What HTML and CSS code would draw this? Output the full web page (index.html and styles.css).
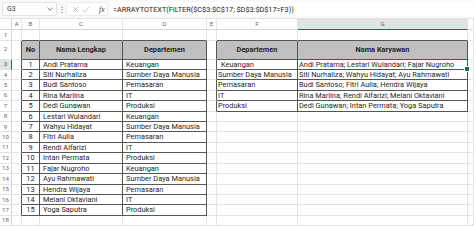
FILE: index.html
```html
<!DOCTYPE html>
<html lang="id">
<head>
  <meta charset="UTF-8">
  <title>ARRAYTOTEXT FILTER</title>
  <link rel="stylesheet" href="styles.css">
</head>
<body>
  <div class="formula-bar">
    <div class="name-box">
      <span>G3</span>
      <svg class="caret" width="6" height="4" viewBox="0 0 6 4"><path d="M0.5 0.8 L3 3.2 L5.5 0.8" fill="none" stroke="#555" stroke-width="0.8"/></svg>
    </div>
    <span class="more">&#8942;</span>
    <div class="fx-tools">
      <svg width="7" height="7" viewBox="0 0 7 7"><path d="M1 1 L6 6 M6 1 L1 6" stroke="#b8b8b8" stroke-width="0.8"/></svg>
      <svg width="8" height="7" viewBox="0 0 8 7"><path d="M0.8 3.8 L2.8 5.8 L7.2 1" fill="none" stroke="#b8b8b8" stroke-width="0.8"/></svg>
      <span class="fx">fx</span>
    </div>
    <div class="formula">=ARRAYTOTEXT(FILTER($C$3:$C$17; $D$3:$D$17=F3))</div>
  </div>

  <div class="sheet">
    <!-- column headers -->
    <div class="corner"></div><div class="ch">A</div><div class="ch">B</div><div class="ch">C</div><div class="ch">D</div><div class="ch">E</div><div class="ch">F</div><div class="ch ch-sel">G</div><div class="ch"></div>

    <!-- row 1 -->
    <div class="rh">1</div><div></div><div class="et"></div><div class="et"></div><div class="et"></div><div></div><div class="et"></div><div class="et"></div><div></div>

    <!-- row 2: table headers -->
    <div class="rh">2</div><div class="el"></div><div class="hd">No</div><div class="hd">Nama Lengkap</div><div class="hd">Departemen</div><div class="el"></div><div class="hd">Departemen</div><div class="hd">Nama Karyawan</div><div></div>

    <div class="rh rh-sel">3</div><div class="el"></div><div class="tb num">1</div><div class="tb">Andi Pratama</div><div class="tb">Keuangan</div><div class="el"></div><div class="tb dept indent">Keuangan</div><div class="tb names selected">Andi Pratama; Lestari Wulandari; Fajar Nugroho</div><div></div>
    <div class="rh">4</div><div class="el"></div><div class="tb num">2</div><div class="tb">Siti Nurhaliza</div><div class="tb">Sumber Daya Manusia</div><div class="el"></div><div class="tb dept">Sumber Daya Manusia</div><div class="tb names">Siti Nurhaliza; Wahyu Hidayat; Ayu Rahmawati</div><div></div>
    <div class="rh">5</div><div class="el"></div><div class="tb num">3</div><div class="tb">Budi Santoso</div><div class="tb">Pemasaran</div><div class="el"></div><div class="tb dept">Pemasaran</div><div class="tb names">Budi Santoso; Fitri Aulia; Hendra Wijaya</div><div></div>
    <div class="rh">6</div><div class="el"></div><div class="tb num">4</div><div class="tb">Rina Marlina</div><div class="tb">IT</div><div class="el"></div><div class="tb dept">IT</div><div class="tb names">Rina Marlina; Rendi Alfarizi; Melani Oktaviani</div><div></div>
    <div class="rh">7</div><div class="el"></div><div class="tb num">5</div><div class="tb">Dedi Gunawan</div><div class="tb">Produksi</div><div class="el"></div><div class="tb dept">Produksi</div><div class="tb names">Dedi Gunawan; Intan Permata; Yoga Saputra</div><div></div>
    <div class="rh">8</div><div class="el"></div><div class="tb num">6</div><div class="tb">Lestari Wulandari</div><div class="tb">Keuangan</div><div></div><div></div><div></div><div></div>
    <div class="rh">9</div><div class="el"></div><div class="tb num">7</div><div class="tb">Wahyu Hidayat</div><div class="tb">Sumber Daya Manusia</div><div></div><div></div><div></div><div></div>
    <div class="rh">10</div><div class="el"></div><div class="tb num">8</div><div class="tb">Fitri Aulia</div><div class="tb">Pemasaran</div><div></div><div></div><div></div><div></div>
    <div class="rh">11</div><div class="el"></div><div class="tb num">9</div><div class="tb">Rendi Alfarizi</div><div class="tb">IT</div><div></div><div></div><div></div><div></div>
    <div class="rh">12</div><div class="el"></div><div class="tb num">10</div><div class="tb">Intan Permata</div><div class="tb">Produksi</div><div></div><div></div><div></div><div></div>
    <div class="rh">13</div><div class="el"></div><div class="tb num">11</div><div class="tb">Fajar Nugroho</div><div class="tb">Keuangan</div><div></div><div></div><div></div><div></div>
    <div class="rh">14</div><div class="el"></div><div class="tb num">12</div><div class="tb">Ayu Rahmawati</div><div class="tb">Sumber Daya Manusia</div><div></div><div></div><div></div><div></div>
    <div class="rh">15</div><div class="el"></div><div class="tb num">13</div><div class="tb">Hendra Wijaya</div><div class="tb">Pemasaran</div><div></div><div></div><div></div><div></div>
    <div class="rh">16</div><div class="el"></div><div class="tb num">14</div><div class="tb">Melani Oktaviani</div><div class="tb">IT</div><div></div><div></div><div></div><div></div>
    <div class="rh">17</div><div class="el"></div><div class="tb num">15</div><div class="tb">Yoga Saputra</div><div class="tb">Produksi</div><div></div><div></div><div></div><div></div>
    <div class="rh">18</div><div></div><div></div><div></div><div></div><div></div><div></div><div></div><div></div>
  </div>
</body>
</html>
```

FILE: styles.css
```css
* {
  box-sizing: border-box;
}

body {
  margin: 0;
  width: 474px;
  height: 226px;
  overflow: hidden;
  background: #fff;
  font-family: Roboto, "Liberation Sans", sans-serif;
  color: #1f1f1f;
}

/* formula bar */

.formula-bar {
  height: 19px;
  display: flex;
  align-items: center;
  padding: 0 0 0 2px;
  background: #f9f9f9;
  border-bottom: 1px solid #e3e3e3;
}

.name-box {
  width: 55px;
  height: 14px;
  display: flex;
  align-items: center;
  justify-content: space-between;
  padding: 0 3px 0 4px;
  background: #fff;
  border: 1px solid #e2e2e2;
  border-radius: 2px;
  font-size: 7px;
  color: #333;
}

.more {
  width: 9px;
  text-align: center;
  font-size: 8px;
  color: #555;
}

.fx-tools {
  width: 42px;
  height: 14px;
  display: flex;
  align-items: center;
  gap: 3px;
  padding-left: 5px;
  background: #fff;
  border: 1px solid #ececec;
  border-radius: 2px;
}

.fx {
  margin-left: 6px;
  font-family: "Liberation Serif", serif;
  font-style: italic;
  font-size: 8px;
  color: #444;
}

.formula {
  flex: 1;
  height: 14px;
  display: flex;
  align-items: center;
  margin-left: 2px;
  padding-left: 3px;
  background: #fff;
  font-size: 7.3px;
  color: #222;
  white-space: nowrap;
}

/* sheet grid */

.sheet {
  display: grid;
  grid-template-columns: 12px 10px 18px 83px 84px 10px 81px 170px 6px;
  grid-template-rows: 11px 10.5px 19px repeat(16, 10.43px);
  font-size: 7.4px;
}

.sheet > div {
  border-right: 1px solid #e4e4e4;
  border-bottom: 1px solid #e4e4e4;
  white-space: nowrap;
  overflow: hidden;
  display: flex;
  align-items: center;
  padding-left: 3px;
  line-height: 1;
}

.sheet > .corner {
  border-right: 1px solid #d6d6d6;
  border-bottom: 1px solid #d6d6d6;
}

.sheet > .ch {
  justify-content: center;
  padding: 0;
  font-size: 6.2px;
  color: #6a6a6a;
  border-bottom: 1px solid #d6d6d6;
}

.sheet > .ch-sel {
  background: #e3e3e3;
  border-bottom: 1px solid #1e7145;
  color: #1e7145;
}

.sheet > .rh {
  justify-content: center;
  padding: 0;
  font-size: 6.2px;
  color: #6a6a6a;
  border-right: 1px solid #d6d6d6;
}

.sheet > .rh-sel {
  background: #e3e3e3;
  border-right: 1px solid #1e7145;
  color: #1e7145;
}

/* data tables */

.sheet > .et {
  border-bottom: 1px solid #555;
}

.sheet > .el {
  border-right: 1px solid #555;
}

.sheet > .hd {
  justify-content: center;
  padding: 0;
  background: #c0c0c0;
  font-weight: bold;
  border-right: 1px solid #555;
  border-bottom: 1px solid #555;
}

.sheet > .tb {
  border-right: 1px solid #555;
  border-bottom: 1px solid #555;
  padding-left: 3px;
}

.sheet > .num {
  justify-content: center;
  padding: 0;
}

.sheet > .dept {
  padding-left: 1px;
}

.sheet > .names {
  padding-left: 1px;
}

.sheet > .indent {
  padding-left: 4px;
}

.sheet > .selected {
  position: relative;
  overflow: visible;
}

.selected::after {
  content: "";
  position: absolute;
  top: -1px;
  left: -1px;
  right: -1px;
  bottom: -1px;
  border: 1.5px solid #1e7145;
}

.selected::before {
  content: "";
  position: absolute;
  right: -3px;
  bottom: -3px;
  width: 4px;
  height: 4px;
  background: #1e7145;
  border: 1px solid #fff;
  z-index: 1;
}
```
